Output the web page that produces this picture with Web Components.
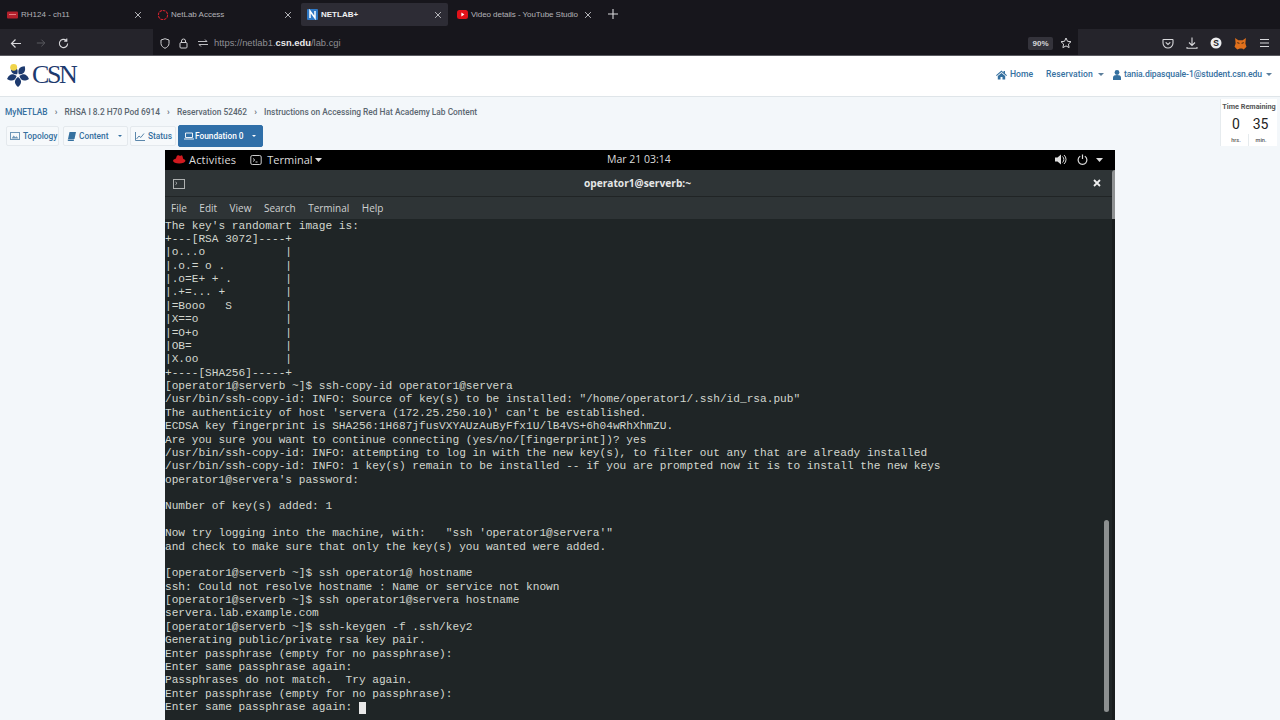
<!DOCTYPE html>
<html lang="en"><head><meta charset="utf-8"><title>NETLAB+</title>
<style>
html,body{margin:0;height:720px;overflow:hidden;background:#f3f7fa;font-family:Roboto,"Liberation Sans",sans-serif}
body{display:flex;flex-direction:column}
</style></head><body>
<x-tabstrip></x-tabstrip>
<x-urlbar></x-urlbar>
<x-sitenav></x-sitenav>
<x-labbar></x-labbar>
<x-console>
<x-terminal>The key's randomart image is:
+---[RSA 3072]----+
|o...o            |
|.o.= o .         |
|.o=E+ + .        |
|.+=... +         |
|=Booo   S        |
|X==o             |
|=O+o             |
|OB=              |
|X.oo             |
+----[SHA256]-----+
[operator1@serverb ~]$ ssh-copy-id operator1@servera
/usr/bin/ssh-copy-id: INFO: Source of key(s) to be installed: "/home/operator1/.ssh/id_rsa.pub"
The authenticity of host 'servera (172.25.250.10)' can't be established.
ECDSA key fingerprint is SHA256:1H687jfusVXYAUzAuByFfx1U/lB4VS+6h04wRhXhmZU.
Are you sure you want to continue connecting (yes/no/[fingerprint])? yes
/usr/bin/ssh-copy-id: INFO: attempting to log in with the new key(s), to filter out any that are already installed
/usr/bin/ssh-copy-id: INFO: 1 key(s) remain to be installed -- if you are prompted now it is to install the new keys
operator1@servera's password: 

Number of key(s) added: 1

Now try logging into the machine, with:   "ssh 'operator1@servera'"
and check to make sure that only the key(s) you wanted were added.

[operator1@serverb ~]$ ssh operator1@ hostname
ssh: Could not resolve hostname : Name or service not known
[operator1@serverb ~]$ ssh operator1@servera hostname
servera.lab.example.com
[operator1@serverb ~]$ ssh-keygen -f .ssh/key2
Generating public/private rsa key pair.
Enter passphrase (empty for no passphrase): 
Enter same passphrase again: 
Passphrases do not match.  Try again.
Enter passphrase (empty for no passphrase): 
Enter same passphrase again: <b></b></x-terminal>
</x-console>
<script>
const def=(name,html)=>customElements.define(name,class extends HTMLElement{
  connectedCallback(){ if(!this.shadowRoot){this.attachShadow({mode:'open'}).innerHTML=html;} }
});
const x='<svg width="8" height="8" viewBox="0 0 9 9" fill="none" stroke="#b9b9bd" stroke-width="1.1"><path d="M1.2 1.2l6.6 6.6M7.800 1.2l-6.600 6.600"/></svg>';
const petal='M0-1.500C-4-4.500-4.500-8 0-12 4.500-8 4-4.500 0-1.500z';
def('x-tabstrip',`<style>
:host{display:flex;align-items:flex-start;height:29px;background:#17161c;font:8px/1 "Liberation Sans",sans-serif;box-sizing:border-box;flex:none;padding:3px 0 0 1px}
.t{display:flex;align-items:center;box-sizing:border-box;height:23px;width:147px;margin-right:3px;padding:0 6px;border-radius:2px;white-space:nowrap;overflow:hidden;flex:none}
.f{width:14px;flex:none;display:flex;justify-content:flex-start}
.t span{flex:1;color:#b4b4b8}
.t.a{background:#2d2c35}.t.a span{color:#f1f1f3;font-weight:700}
.t svg{flex:none}
.p{margin:6px 0 0 15px;display:flex}
</style>
<div class="t"><div class="f"><svg width="11" height="8" viewBox="0 0 11 8"><rect y=".5" width="11" height="7" rx="1" fill="#b3202c"/><path d="M2 3.500h7" stroke="#e99" stroke-width=".8"/></svg></div><span>RH124 - ch11</span>${x}</div>
<div class="t"><div class="f"><svg width="12" height="12" viewBox="0 0 13 13" fill="none"><circle cx="6.500" cy="6.500" r="5" stroke="#d5232e" stroke-width="1.100" stroke-dasharray="3 .8"/></svg></div><span>NetLab Access</span>${x}</div>
<div class="t a"><div class="f"><svg width="11" height="11" viewBox="0 0 11 11"><rect width="11" height="11" rx="1" fill="#2f78c4"/><path d="M3 9V2l5 7V2" fill="none" stroke="#fff" stroke-width="1.500"/></svg></div><span>NETLAB+</span>${x}</div>
<div class="t" style="width:142px;margin-right:0;padding-right:1px"><div class="f"><svg width="11" height="9" viewBox="0 0 11 9"><rect width="11" height="9" rx="2.500" fill="#e0121a"/><path d="M4.400 2.600v3.800l3-1.900z" fill="#fff"/></svg></div><span style="letter-spacing:-.07px">Video details - YouTube Studio</span>${x}</div>
<div class="p"><svg width="10" height="10" viewBox="0 0 11 11" stroke="#d9d9dc" stroke-width="1.200"><path d="M5.500 0v11M0 5.500h11"/></svg></div>`);
def('x-urlbar',`<style>
:host{display:flex;align-items:center;height:27px;box-sizing:border-box;background:#25242b;color:#c9c9cd;flex:none;padding:2px 0 0 10px;border-bottom:1px solid #5a5a60;font:9.400px/1 "Liberation Sans",sans-serif}
svg{flex:none;display:block}
.nav{display:flex;align-items:center;width:143px;flex:none}
.url{display:flex;align-items:center;height:26px;margin-top:-2px;padding:2px 0 0 7px;background:#17161c;width:925px;box-sizing:border-box;flex:none}
.u{margin-left:6px;color:#8f8f94;white-space:nowrap;flex:1}.u b{color:#e8e8ea;font-weight:700}
.z{background:#34333b;color:#d7d7da;font-size:8px;font-weight:700;height:13px;line-height:13px;width:25px;text-align:center;border-radius:2px}
.r{display:flex;align-items:center;margin-left:78px}
.r div{width:24px;display:flex;justify-content:center}
</style>
<div class="nav">
<svg width="12" height="11" viewBox="0 0 12 11" fill="none" stroke="#d8d8db" stroke-width="1.200"><path d="M11 5.500H1.500M5.500 1.500l-4 4 4 4"/></svg>
<svg width="10" height="10" viewBox="0 0 12 11" fill="none" stroke="#5a5a60" stroke-width="1.200" style="margin-left:14px"><path d="M1 5.500h9.500M6.500 1.500l4 4-4 4"/></svg>
<svg width="11" height="11" viewBox="0 0 12 12" fill="none" stroke="#d8d8db" stroke-width="1.200" style="margin-left:12px"><path d="M10.500 6a4.500 4.500 0 1 1-1.400-3.300M9.600.6v2.800H6.800"/></svg>
</div>
<div class="url">
<svg width="10" height="11" viewBox="0 0 10 11" fill="none" stroke="#cfcfd2" stroke-width="1"><path d="M5 .7l4 1.300v3.500c0 2.300-2 3.900-4 4.800-2-.9-4-2.500-4-4.800V2z"/></svg>
<svg width="9" height="11" viewBox="0 0 9 11" fill="none" stroke="#cfcfd2" stroke-width="1" style="margin-left:9px"><rect x="1" y="4.500" width="7" height="5.500" rx="1"/><path d="M2.500 4.500V3a2 2 0 0 1 4 0v1.500"/></svg>
<svg width="10" height="8" viewBox="0 0 10 8" fill="none" stroke="#bdbdc1" stroke-width="1" style="margin-left:10px"><path d="M0 2.500h9M7 .5l2 2M10 5.500H1M3 7.500l-2-2"/></svg>
<span class="u">https://netlab1.<b>csn.edu</b>/lab.cgi</span>
<span class="z">90%</span>
<svg width="12" height="12" viewBox="0 0 12 12" fill="none" stroke="#d8d8db" stroke-width="1" style="margin:0 6px 0 7px"><path d="M6 1l1.500 3.300 3.500.4-2.600 2.400.7 3.500L6 8.900l-3.100 1.700.7-3.500L1 4.700l3.500-.4z"/></svg>
</div>
<div class="r">
<div><svg width="12" height="11" viewBox="0 0 11 11" fill="none" stroke="#d8d8db" stroke-width="1.100"><path d="M1 1.500h9a.5.5 0 0 1 .5.5v3a5 5 0 0 1-10 0V2a.5.5 0 0 1 .5-.5z"/><path d="M3.200 4.300l2.300 2.200 2.300-2.200"/></svg></div>
<div><svg width="12" height="12" viewBox="0 0 12 12" fill="none" stroke="#d8d8db" stroke-width="1.100"><path d="M6 .5v8M3 5.500l3 3 3-3M1 10v1.300h10V10"/></svg></div>
<div><svg width="12" height="12" viewBox="0 0 12 12"><circle cx="6" cy="6" r="5.500" fill="#ececee"/><text x="6" y="9" font-size="8.500" font-weight="700" font-family="Liberation Sans" text-anchor="middle" fill="#222">S</text></svg></div>
<div><svg width="13" height="13" viewBox="0 0 12 12"><path d="M1 1l3 2h4l3-2-.5 5 1 3-2.500 2.500-1.500-1h-2L3 11.500.5 9l1-3z" fill="#e0701c"/><path d="M3 5l2 1M9 5L7 6" stroke="#5b3413" stroke-width="1"/></svg></div>
<div><svg width="11" height="10" viewBox="0 0 11 10" stroke="#d8d8db" stroke-width="1.100"><path d="M1 1.500h9M1 5h9M1 8.500h9"/></svg></div>
</div>`);
def('x-sitenav',`<style>
:host{display:flex;align-items:center;justify-content:space-between;height:41px;box-sizing:border-box;background:#fff;border-bottom:1px solid #dfe5e9;flex:none;padding:0 8px 3px 6px;font:500 8.600px/1 Roboto,sans-serif;color:#35709f}
.logo{display:flex;align-items:center;gap:2px;font:26px/1 "Liberation Serif",serif;color:#1d3a6e;letter-spacing:-2.400px;margin-top:1px}
.m{display:flex;align-items:center}
.i{display:flex;align-items:center;gap:3px}
.car{width:0;height:0;border:3px solid transparent;border-top-color:#5d7f9b;border-bottom:0;margin-left:5px}
</style>
<div class="logo">
<svg width="24" height="25" viewBox="-12.500 -12.500 25 25"><g fill="#1d3a6e"><path d="${petal}" transform="rotate(-36)"/><path d="${petal}" transform="rotate(36)"/><path d="${petal}" transform="rotate(108)"/><path d="${petal}" transform="rotate(180)"/><path d="${petal}" transform="rotate(252)"/></g><circle cx="-4.500" cy="-8.500" r="3.600" fill="#f0d44a"/></svg>
<span>CSN</span></div>
<div class="m">
<span class="i"><svg width="11" height="10" viewBox="0 0 11 10" fill="#35709f"><path d="M5.500.5L0 5.200l.7.800 4.800-4 4.800 4 .7-.8-2-1.700V1H7.500v1.400z"/><path d="M1.800 6l3.700-3 3.700 3v3.500H6.500V7h-2v2.500H1.800z"/></svg>Home</span>
<span class="i" style="margin-left:13px;gap:0;letter-spacing:.1px">Reservation<span class="car"></span></span>
<span class="i" style="margin-left:9px;letter-spacing:-.08px"><svg width="8" height="10" viewBox="0 0 8 10" fill="#35709f"><circle cx="4" cy="2.500" r="2.400"/><path d="M0 10V7.500C0 5.800 1.500 5 4 5s4 .8 4 2.500V10z"/></svg>tania.dipasquale-1@student.csn.edu<span class="car" style="margin-left:1px"></span></span>
</div>`);
def('x-labbar',`<style>
:host{display:flex;justify-content:space-between;height:53px;box-sizing:border-box;background:#f3f7fa;flex:none;font:500 8.350px/1 Roboto,sans-serif;color:#5a6670}
.l{padding:10px 0 0 5px}
.bc{display:flex;align-items:center;height:11px;white-space:nowrap}
.bc a{color:#35709f}.bc i{font-style:normal;margin:0 6.500px;color:#68737c;font-size:9px;font-weight:700;width:4px;text-align:center}
.bt{display:flex;align-items:center;margin-top:8px;height:20px;padding-left:1px}
.b{display:flex;align-items:center;height:20px;box-sizing:border-box;border:1px solid #e4e9ed;background:#f6f9fb;color:#35709f;padding:0 0 0 4px;gap:3px;border-radius:2px;white-space:nowrap;flex:none}
.b.on{background:#2f6fa8;color:#fff;border-color:#2f6fa8;height:22px;padding:0 0 0 5px;border-radius:2px;font-size:8.300px}
.car{width:0;height:0;border:2.500px solid transparent;border-top-color:currentColor;border-bottom:0}
.time{width:57px;height:47px;margin:2px 3px 0 0;box-sizing:border-box;background:#fff;border:1px solid #e6ebee;border-width:0 0 0 1px;display:grid;grid-template-columns:27px 29px;grid-template-rows:16px 19px 12px;text-align:center;color:#333}
.time .h{grid-column:1/3;font:700 7.300px/16px Roboto,sans-serif;color:#555;white-space:nowrap}
.time .n{font:400 14px/19px Roboto,sans-serif;color:#222}
.time .s{font:500 5.600px/12px Roboto,sans-serif;color:#555}
.time .s+.s{border-left:1px solid #e6ebee}
.l1{padding-left:3px}.r1{padding-right:4px}
</style>
<div class="l"><div class="bc"><a>MyNETLAB</a><i>›</i>RHSA I 8.2 H70 Pod 6914<i>›</i>Reservation 52462<i>›</i>Instructions on Accessing Red Hat Academy Lab Content</div>
<div class="bt">
<div class="b" style="width:53px;margin-right:4px;padding-left:3px"><svg width="10" height="8" viewBox="0 0 10 8" fill="#6f97b8"><path d="M0 0h10v8H0zM1 1v6h8V1z" fill-rule="evenodd"/><path d="M1.500 6.500l2.200-3 1.600 1.800 1.200-1 2 2.200z"/></svg>Topology</div>
<div class="b" style="width:65px;margin-right:2px;padding-left:3px"><svg width="9" height="9" viewBox="0 0 9 9" fill="#35709f"><path d="M2.500 0H9L7.500 7H1zM1 7.500h6l-.2 1.500H1.500C.5 9 .5 7.500 1 7.500z"/></svg>Content<span class="car" style="margin-left:6px"></span></div>
<div class="b" style="width:46px;margin-right:2px"><svg width="10" height="9" viewBox="0 0 10 9" fill="none" stroke="#5b87ab" stroke-width="1"><path d="M.5 0v8.500H10M1.500 7l2.500-3 1.800 1.500L9 1.500"/></svg>Status</div>
<div class="b on" style="width:85px;gap:1px"><svg width="10" height="8" viewBox="0 0 10 8" fill="none" stroke="#fff" stroke-width=".9"><path d="M1.500 1h7v4.500h-7zM0 7h10"/></svg><span>Foundation 0</span><span class="car" style="margin-left:7px"></span></div>
</div></div>
<div class="time"><div class="h">Time Remaining</div><div class="n l1">0</div><div class="n r1">35</div><div class="s l1">hrs.</div><div class="s r1">min.</div></div>`);
def('x-console',`<style>
:host{flex:1;display:flex;flex-direction:column;align-self:center;width:950px;box-sizing:border-box;background:#000;position:relative;min-height:0;overflow:hidden}
.top{height:20px;display:flex;align-items:center;flex:none;color:#dcdcdc;font:11px/1 "Open Sans","Noto Sans",sans-serif;padding:0 12px 1px 8px;box-sizing:border-box}
.top svg{flex:none;display:block}
.a{display:flex;align-items:center}
.c{position:absolute;left:442px;top:3.500px;font-size:10.500px}
.sp{flex:1}
</style>
<div class="top">
<div class="a"><svg width="13" height="9" viewBox="0 0 13 9"><path d="M2.700 4.300L3.800 1C4 .3 5 0 6 .4c1 .4 1.600.3 2.300 0 .6-.2 1 .1 1.200.8l.8 3C8 5.200 5 5.100 2.700 4.300z" fill="#d11a1f"/><ellipse cx="6.200" cy="5.800" rx="6.200" ry="2.700" fill="#d11a1f"/></svg><span style="margin-left:3px;letter-spacing:.2px">Activities</span></div>
<div class="a" style="margin-left:14px"><svg width="12" height="12" viewBox="0 0 12 12" fill="none" stroke="#ccc" stroke-width="1"><rect x=".8" y="1.500" width="10.400" height="9" rx="1.500"/><path d="M3 4.500l1.800 1.500L3 7.500M5.500 8h2"/></svg><span style="margin-left:5px">Terminal</span><svg width="7" height="4" viewBox="0 0 7 4" style="margin-left:2px"><path d="M0 0h7L3.500 4z" fill="#ddd"/></svg></div>
<span class="c">Mar 21  03:14</span>
<span class="sp"></span>
<svg width="12" height="11" viewBox="0 0 12 11" fill="#ddd"><path d="M0 3.500h2.500L6 .5v10l-3.500-3H0z"/><path d="M7.500 2.500a4 4 0 0 1 0 6M9 1a6 6 0 0 1 0 9" fill="none" stroke="#ddd" stroke-width="1"/></svg>
<svg width="11" height="11" viewBox="0 0 11 11" fill="none" stroke="#ddd" stroke-width="1.200" style="margin-left:10px"><path d="M3.200 2.200a4.400 4.400 0 1 0 4.600 0M5.500 .5v4.500"/></svg>
<svg width="7" height="4" viewBox="0 0 7 4" style="margin-left:8px"><path d="M0 0h7L3.500 4z" fill="#ddd"/></svg>
</div><slot></slot>`);
def('x-terminal',`<style>
:host{flex:1;display:flex;flex-direction:column;min-height:0;position:relative;color:#dcdcdc;overflow:hidden}
.tb{height:27px;box-sizing:border-box;flex:none;background:#2e3436;display:flex;align-items:center;justify-content:center;border-bottom:1px solid #202425;position:relative;font:700 10.200px/1 "Open Sans","Noto Sans",sans-serif;color:#e4e6e6;padding-right:5px}
.tb .ic{position:absolute;left:8px;top:9px}
.tb .x{position:absolute;right:14px;top:9px}
.mb{height:22px;flex:none;box-sizing:border-box;background:#2e3436;display:flex;align-items:center;gap:12.500px;padding:0 0 0 6px;font:10px/1 "Open Sans","Noto Sans",sans-serif;color:#cfd2d2}
.body{flex:1;min-height:0;background:#1f2526;position:relative;overflow:hidden;padding-top:.5px}
pre{margin:0;font:11.150px/13.370px "Liberation Mono",monospace;color:#d3d7cf;white-space:pre}
::slotted(b){display:inline-block;width:7px;height:12px;background:#e8e8e8;vertical-align:top;margin-top:1px}
.track{position:absolute;right:6px;top:301px;bottom:8px;width:5px;border-radius:3px;background:#8c9090}
.shade{position:absolute;right:0;top:0;bottom:0;width:3px;background:#191d1e}
.edge{position:absolute;right:0;top:0;width:3px;height:49px;background:#8e9192;border-radius:3px 0 0 0}
</style>
<div class="tb"><svg class="ic" width="12" height="10" viewBox="0 0 12 10" fill="none" stroke="#aeb1b1" stroke-width="1"><rect x=".5" y=".5" width="11" height="9"/><path d="M2.500 3l1.500 1.300-1.500 1.300"/></svg>operator1@serverb:~<svg class="x" width="8" height="8" viewBox="0 0 8 8" stroke="#eee" stroke-width="1.800"><path d="M1 1l6 6M7 1L1 7"/></svg></div>
<div class="mb"><span>File</span><span>Edit</span><span>View</span><span>Search</span><span>Terminal</span><span>Help</span></div>
<div class="body"><pre><slot></slot></pre><div class="shade"></div><div class="track"></div></div>
<div class="edge"></div>`);
</script>
</body></html>
